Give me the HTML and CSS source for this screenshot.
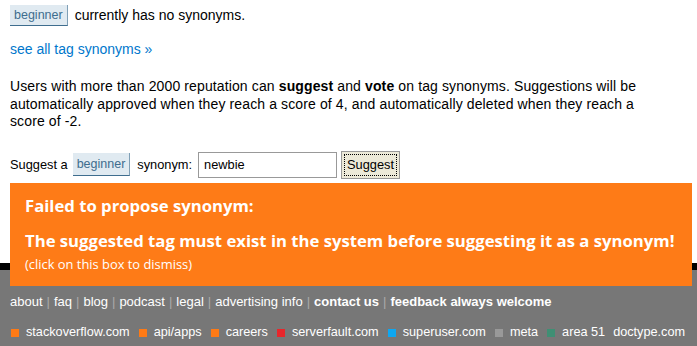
FILE: index.html
```html
<!DOCTYPE html>
<html>
<head>
<meta charset="utf-8">
<title>Tag synonyms</title>
<link rel="stylesheet" href="styles.css">
</head>
<body>
<div class="content">
  <p class="status"><a class="post-tag">beginner</a> currently has no synonyms.</p>
  <p class="see-all"><a href="#">see all tag synonyms »</a></p>
  <p class="info">Users with more than 2000 reputation can <b>suggest</b> and <b>vote</b> on tag synonyms. Suggestions will be automatically approved when they reach a score of 4, and automatically deleted when they reach a score of -2.</p>
  <form class="suggest">
    <span>Suggest a</span>
    <a class="post-tag">beginner</a>
    <span>synonym:</span>
    <input class="syn-input" type="text" value="newbie">
    <button class="syn-btn" type="button"><span class="focus">Suggest</span></button>
  </form>
</div>
<div class="footer-strip"></div>
<div class="footer">
  <div class="footer-menu">
    <a>about</a><span class="sep">|</span><a>faq</a><span class="sep">|</span><a>blog</a><span class="sep">|</span><a>podcast</a><span class="sep">|</span><a>legal</a><span class="sep">|</span><a>advertising info</a><span class="sep">|</span><a class="strong">contact us</a><span class="sep">|</span><a class="strong">feedback always welcome</a>
  </div>
  <div class="footer-sites">
    <a><i class="sq so"></i>stackoverflow.com</a>
    <a><i class="sq so"></i>api/apps</a>
    <a><i class="sq so"></i>careers</a>
    <a><i class="sq sf"></i>serverfault.com</a>
    <a><i class="sq su"></i>superuser.com</a>
    <a><i class="sq meta"></i>meta</a>
    <a><i class="sq a51"></i>area 51</a>
    <a>doctype.com</a>
  </div>
</div>
<div class="notify">
  <div class="notify-title">Failed to propose synonym:</div>
  <div class="notify-msg">The suggested tag must exist in the system before suggesting it as a synonym!</div>
  <div class="notify-hint">(click on this box to dismiss)</div>
</div>
</body>
</html>
```
FILE: styles.css
```css
body {
  margin: 0;
  background: #fff;
  color: #000;
  font-family: "Liberation Sans", Arial, sans-serif;
  font-size: 14px;
}
.content {
  padding: 0 10px;
  height: 263px;
  box-sizing: border-box;
  overflow: hidden;
}
p { margin: 0; }
.status {
  margin-top: 5px;
  height: 21px;
  line-height: 21px;
  display: flex;
  align-items: center;
  gap: 7px;
}
.post-tag {
  display: inline-block;
  color: #3e6d8e;
  background: #e0eaf1;
  border-bottom: 1px solid #3e6d8e;
  border-right: 1px solid #7f9fb6;
  padding: 3px 4px;
  font-size: 12.5px;
  line-height: 14px;
  text-decoration: none;
}
.see-all {
  margin-top: 15px;
  line-height: 17px;
}
.see-all a { color: #0077cc; text-decoration: none; }
.info {
  margin-top: 20px;
  line-height: 17.5px;
  width: 650px;
  letter-spacing: 0.12px;
}
.suggest {
  margin: 20px 0 0;
  display: flex;
  align-items: center;
  height: 28px;
  font-size: 12.8px;
}
.suggest .post-tag { margin: 0 7px 0 5px; padding: 4px 4px; }
.syn-input {
  margin: 0 4px 0 6px;
  width: 139px;
  height: 26px;
  box-sizing: border-box;
  border: 1px solid #999;
  padding: 0 5px;
  font-family: "Liberation Sans", Arial, sans-serif;
  font-size: 12.8px;
  color: #000;
}
.syn-btn {
  width: 59px;
  height: 28px;
  box-sizing: border-box;
  background: #ece9d8;
  border: 1px solid #999;
  padding: 2px;
  font-family: "Liberation Sans", Arial, sans-serif;
  font-size: 12.8px;
  color: #000;
}
.syn-btn .focus {
  display: block;
  height: 100%;
  box-sizing: border-box;
  border: 1px dotted #000;
  line-height: 20px;
}
.footer-strip { height: 7px; background: #000; }
.footer {
  background: #777;
  height: 76px;
  padding: 23px 10px 0;
  box-sizing: border-box;
  color: #fff;
}
.footer-menu { line-height: 18px; font-size: 13px; }
.footer-menu .sep { color: #aaa; margin: 0 4px; }
.footer-menu .strong { font-weight: bold; }
.footer-sites {
  margin-top: 12px;
  line-height: 18px;
  font-size: 12.7px;
  display: flex;
  gap: 8px;
  white-space: nowrap;
}
.footer-sites a { display: flex; align-items: center; }
.sq {
  display: inline-block;
  width: 8px;
  height: 8px;
  margin: 1px 7px 0 1px;
}
.so { background: #fe7a15; }
.sf { background: #e7262b; }
.su { background: #0ea7f1; }
.meta { background: #999; }
.a51 { background: #3f8f74; }
.notify {
  position: absolute;
  top: 183px;
  left: 10px;
  width: 682px;
  height: 103px;
  box-sizing: border-box;
  background: #fe7b17;
  color: #fff;
  padding: 13px 15px 0;
  font-family: "Open Sans", "Liberation Sans", sans-serif;
}
.notify-title { font-weight: bold; font-size: 16.7px; line-height: 20px; }
.notify-msg { font-weight: bold; font-size: 16.7px; line-height: 20px; margin-top: 15px; }
.notify-hint { font-size: 12.9px; line-height: 16px; margin-top: 5px; }
```
